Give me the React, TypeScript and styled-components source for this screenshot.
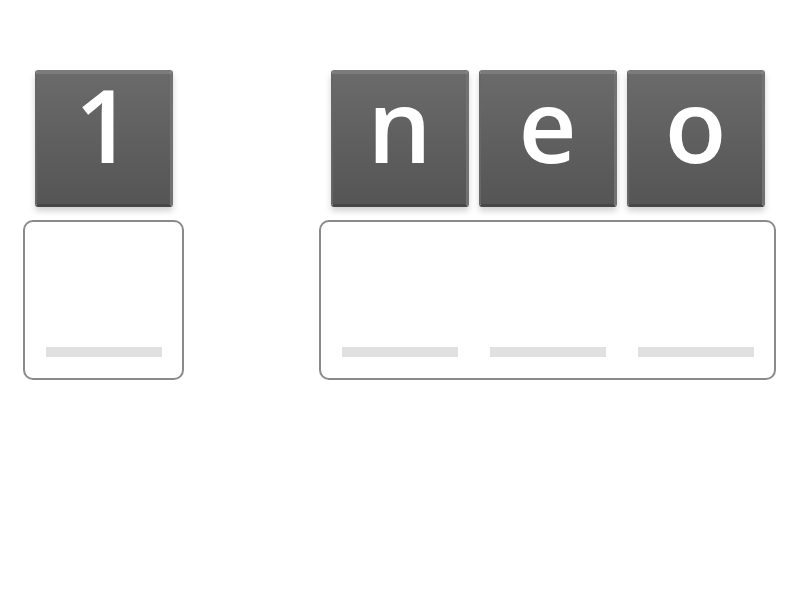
import styled, { createGlobalStyle } from "styled-components";

const GlobalStyle = createGlobalStyle`
  body {
    margin: 0;
    background: #ffffff;
    font-family: "Open Sans", "Liberation Sans", sans-serif;
  }
`;

const groups = [["1"], ["n", "e", "o"]];

export default function App() {
  return (
    <>
      <GlobalStyle />
      <Board>
        {groups.map((letters, i) => (
          <Group key={i}>
            <TileRow>
              {letters.map((l, j) => (
                <Tile key={j}>{l}</Tile>
              ))}
            </TileRow>
            <AnswerBox>
              {letters.map((_, j) => (
                <Slot key={j} />
              ))}
            </AnswerBox>
          </Group>
        ))}
      </Board>
    </>
  );
}

const Board = styled.div`
  display: flex;
  align-items: flex-start;
  gap: 135px;
  padding: 70px 0 0 23px;
`;

const Group = styled.div`
  display: flex;
  flex-direction: column;
  gap: 13px;
`;

const TileRow = styled.div`
  display: flex;
  gap: 10px;
  padding: 0 11px 0 12px;
`;

const Tile = styled.div`
  box-sizing: border-box;
  width: 138px;
  height: 137px;
  display: flex;
  justify-content: center;
  align-items: center;
  padding-bottom: 30px;
  border-radius: 3px;
  border-top: 4px solid #7b7b7b;
  border-left: 2px solid #666;
  border-right: 3px solid #727272;
  border-bottom: 3px solid #474747;
  background: linear-gradient(#6a6a6a, #555555);
  box-shadow: 0 4px 6px rgba(0, 0, 0, 0.18);
  color: #ffffff;
  font-size: 101px;
  font-weight: 600;
  line-height: 1;
`;

const AnswerBox = styled.div`
  box-sizing: border-box;
  height: 160px;
  display: flex;
  align-items: flex-end;
  gap: 32px;
  padding: 0 20px 21px 21px;
  border: 2px solid #8a8a8a;
  border-radius: 10px;
`;

const Slot = styled.div`
  width: 116px;
  height: 10px;
  background: #e0e0e0;
`;
